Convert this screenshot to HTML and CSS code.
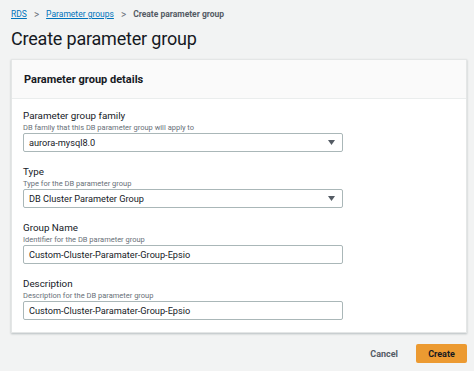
FILE: index.html
```html
<!DOCTYPE html>
<html lang="en">
<head>
    <meta charset="utf-8">
    <title>Create parameter group</title>
    <link rel="stylesheet" href="styles.css">
</head>
<body>
<div class="page">
    <div class="breadcrumbs">
        <a href="#">RDS</a>
        <span class="sep">&gt;</span>
        <a href="#">Parameter groups</a>
        <span class="sep">&gt;</span>
        <span class="current">Create parameter group</span>
    </div>
    <h1 class="title">Create parameter group</h1>

    <div class="card">
        <div class="card-header">Parameter group details</div>
        <div class="card-body">
            <div class="field">
                <div class="label">Parameter group family</div>
                <div class="hint">DB family that this DB parameter group will apply to</div>
                <div class="control select">
                    <span>aurora-mysql8.0</span>
                    <svg class="caret" width="7" height="5" viewBox="0 0 7 5"><path d="M0 0h7L3.5 5z" fill="#545b64"/></svg>
                </div>
            </div>
            <div class="field">
                <div class="label">Type</div>
                <div class="hint">Type for the DB parameter group</div>
                <div class="control select">
                    <span>DB Cluster Parameter Group</span>
                    <svg class="caret" width="7" height="5" viewBox="0 0 7 5"><path d="M0 0h7L3.5 5z" fill="#545b64"/></svg>
                </div>
            </div>
            <div class="field">
                <div class="label">Group Name</div>
                <div class="hint">Identifier for the DB parameter group</div>
                <div class="control"><span>Custom-Cluster-Paramater-Group-Epsio</span></div>
            </div>
            <div class="field">
                <div class="label">Description</div>
                <div class="hint">Description for the DB parameter group</div>
                <div class="control"><span>Custom-Cluster-Paramater-Group-Epsio</span></div>
            </div>
        </div>
    </div>

    <div class="actions">
        <span class="cancel">Cancel</span>
        <span class="create">Create</span>
    </div>
</div>
</body>
</html>
```

FILE: styles.css
```css
html, body {
    margin: 0;
    height: 100%;
}

body {
    background: #f2f3f3;
    font-family: Roboto, "Open Sans", Arial, sans-serif;
    color: #16191f;
}

a {
    color: #0073bb;
    text-decoration: underline;
}

.page {
    padding: 7px 8px 0 11px;
}

.breadcrumbs {
    display: flex;
    align-items: center;
    font-size: 8.5px;
    height: 14px;
}

.breadcrumbs .sep {
    color: #687078;
    margin: 0 7px;
    font-size: 10px;
}

.breadcrumbs .current {
    color: #545b64;
    font-weight: 700;
}

.title {
    margin: 6px 0 0 0;
    font-size: 18px;
    font-weight: 400;
    line-height: 24px;
    letter-spacing: -0.2px;
}

.card {
    margin-top: 8px;
    background: #fff;
    border: 1px solid #e4e6e6;
    box-shadow: 0 1px 2px rgba(0, 28, 36, 0.25);
    width: 454px;
}

.card-header {
    background: #fafafa;
    border-bottom: 1px solid #eaeded;
    height: 38px;
    display: flex;
    align-items: center;
    padding-left: 12px;
    font-size: 11px;
    font-weight: 700;
}

.card-body {
    padding: 11px 11px 12px 11px;
    display: flex;
    flex-direction: column;
    gap: 14px;
}

.label {
    font-size: 9.8px;
    line-height: 12px;
}

.hint {
    font-size: 7.5px;
    line-height: 11px;
    color: #687078;
}

.control {
    box-sizing: border-box;
    width: 320px;
    height: 19px;
    border: 1px solid #aab7b8;
    border-radius: 2px;
    display: flex;
    align-items: center;
    justify-content: space-between;
    padding: 0 7px 0 5px;
    font-size: 9.2px;
}

.actions {
    display: flex;
    justify-content: flex-end;
    align-items: center;
    margin-top: 11px;
    width: 456px;
    font-size: 9px;
    font-weight: 700;
}

.cancel {
    color: #545b64;
    margin-right: 18px;
}

.create {
    background: #ec9a31;
    color: #16191f;
    width: 51px;
    height: 19px;
    display: flex;
    align-items: center;
    justify-content: center;
    border-radius: 2px;
}
```
